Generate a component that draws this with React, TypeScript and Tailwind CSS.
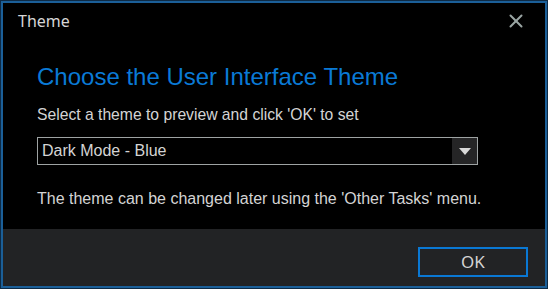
import { X } from 'lucide-react';

export default function App() {
  return (
    <div className="h-[289px] w-[548px] border border-[#0e2a44] bg-black">
      <div className="flex h-full w-full flex-col border-2 border-[#1b5f98]">
        <div className="flex h-[36px] items-center justify-between pl-[15px] pr-[18px]">
          <span className="font-['Noto_Sans',sans-serif] text-[16px] text-[#d6d6d6]">Theme</span>
          <X className="h-[22px] w-[22px] text-[#9aa5a3]" strokeWidth={2.2} />
        </div>
        <div className="flex-1 pl-[34px] font-['Liberation_Sans',Arial,sans-serif]">
          <h1 className="mt-[25px] text-[24px] leading-[26px] text-[#0a7ad6]">Choose the User Interface Theme</h1>
          <p className="mt-[16px] text-[15.7px] leading-[18px] text-[#d4d4d4]">
            Select a theme to preview and click 'OK' to set
          </p>
          <div className="mt-[13px] mr-[67px] flex h-[28px] items-stretch border border-[#9ea3a3]">
            <span className="flex flex-1 items-center pl-[4px] text-[16px] text-[#d4d4d4]">Dark Mode - Blue</span>
            <span className="flex w-[25px] items-center justify-center bg-[#252526]">
              <svg width="12" height="7" viewBox="0 0 12 7">
                <path d="M0 0 H12 L6 7 Z" fill="#d8d8d8" />
              </svg>
            </span>
          </div>
          <p className="mt-[25px] whitespace-nowrap text-[16px] leading-[18px] text-[#d4d4d4]">
            The theme can be changed later using the 'Other Tasks' menu.
          </p>
        </div>
        <div className="flex h-[57px] items-start justify-end bg-[#222325] pr-[17px] pt-[18px]">
          <button
            type="button"
            className="h-[30px] w-[110px] border-2 border-[#0a78d4] font-['Noto_Sans',sans-serif] text-[17px] text-[#d4d4d4]"
          >
            OK
          </button>
        </div>
      </div>
    </div>
  );
}
